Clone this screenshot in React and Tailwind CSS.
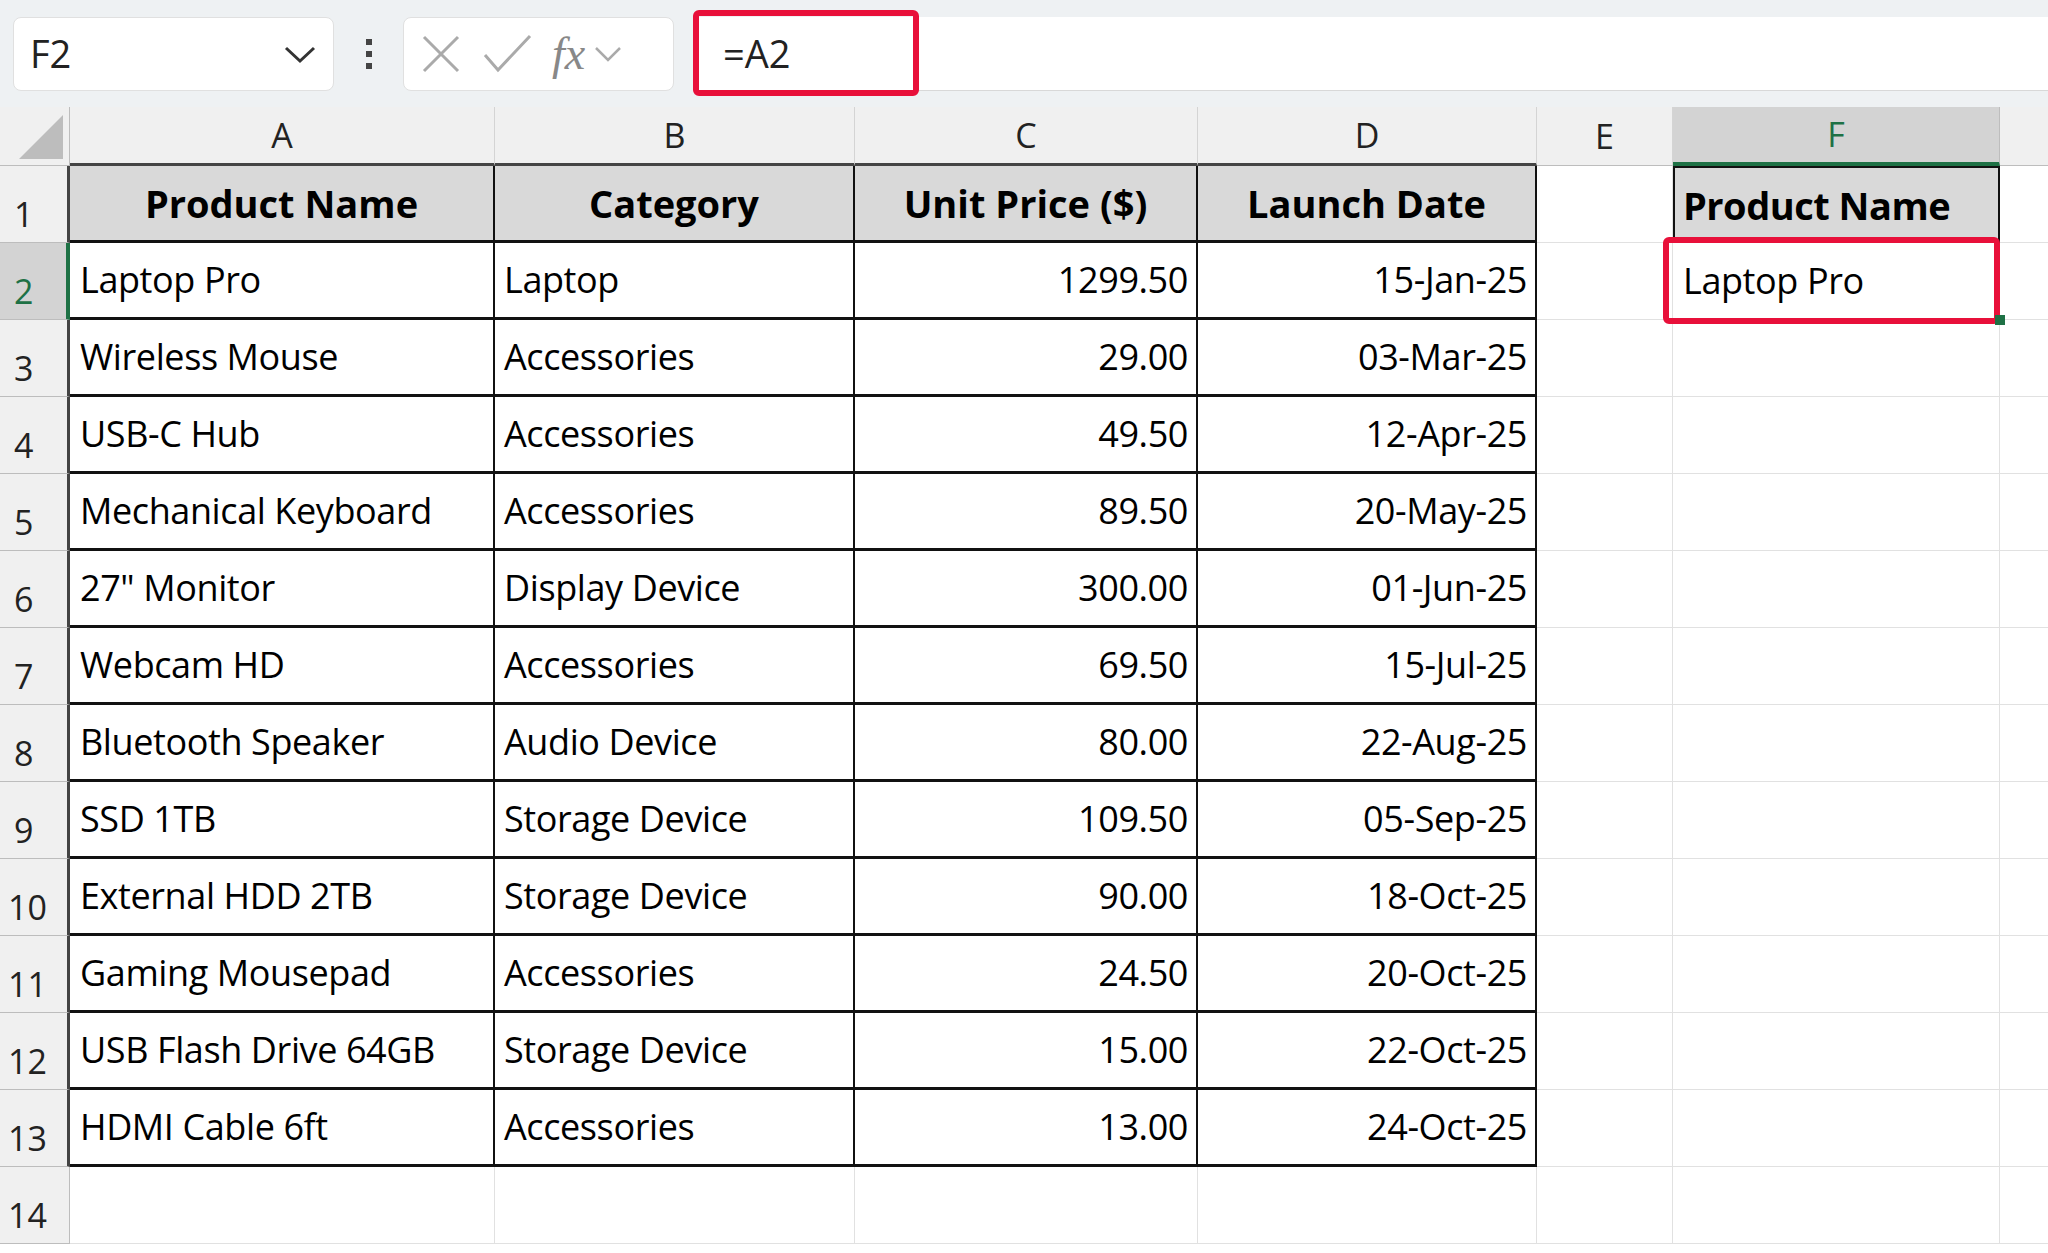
import React from "react";

const rows = [
  ["Laptop Pro", "Laptop", "1299.50", "15-Jan-25"],
  ["Wireless Mouse", "Accessories", "29.00", "03-Mar-25"],
  ["USB-C Hub", "Accessories", "49.50", "12-Apr-25"],
  ["Mechanical Keyboard", "Accessories", "89.50", "20-May-25"],
  ['27" Monitor', "Display Device", "300.00", "01-Jun-25"],
  ["Webcam HD", "Accessories", "69.50", "15-Jul-25"],
  ["Bluetooth Speaker", "Audio Device", "80.00", "22-Aug-25"],
  ["SSD 1TB", "Storage Device", "109.50", "05-Sep-25"],
  ["External HDD 2TB", "Storage Device", "90.00", "18-Oct-25"],
  ["Gaming Mousepad", "Accessories", "24.50", "20-Oct-25"],
  ["USB Flash Drive 64GB", "Storage Device", "15.00", "22-Oct-25"],
  ["HDMI Cable 6ft", "Accessories", "13.00", "24-Oct-25"],
];

const cols = "grid-cols-[70px_425px_360px_343px_339px_136px_327px_1fr]";

export default function App() {
  const font = { fontFamily: '"Open Sans", "Liberation Sans", sans-serif' };
  return (
    <div className="w-[2048px] h-[1253px] overflow-hidden bg-white text-black" style={font}>
      {/* toolbar */}
      <div className="h-[107px] bg-[#eef1f3] flex items-center pl-[13px] gap-0 relative">
        <div className="w-[321px] h-[74px] bg-white rounded-lg border border-[#e0e0e0] flex items-center justify-between px-4">
          <span className="text-[38px] text-[#222]">F2</span>
          <svg width="34" height="20" viewBox="0 0 34 20"><path d="M3 4 L17 17 L31 4" fill="none" stroke="#333" strokeWidth="3" /></svg>
        </div>
        <div className="w-[69px] flex flex-col items-center gap-[6px]">
          <div className="w-[6px] h-[6px] bg-[#444]" /><div className="w-[6px] h-[6px] bg-[#444]" /><div className="w-[6px] h-[6px] bg-[#444]" />
        </div>
        <div className="w-[271px] h-[74px] bg-white rounded-lg border border-[#e0e0e0] flex items-center gap-[20px] pl-4">
          <svg width="42" height="42" viewBox="0 0 42 42"><path d="M4 4 L38 38 M38 4 L4 38" stroke="#aaa" strokeWidth="3" /></svg>
          <svg width="50" height="42" viewBox="0 0 50 42"><path d="M3 22 L16 37 L48 3" fill="none" stroke="#aaa" strokeWidth="3" /></svg>
          <span className="text-[46px] italic text-[#888] leading-none" style={{ fontFamily: '"Liberation Serif", serif' }}>fx</span>
          <svg width="30" height="20" viewBox="0 0 30 20" className="-ml-3"><path d="M3 4 L15 16 L27 4" fill="none" stroke="#aaa" strokeWidth="2.5" /></svg>
        </div>
        <div className="ml-[19px] flex-1 h-[74px] bg-white border-b border-[#d8d8d8] flex items-center relative">
          <div className="absolute left-0 top-[-7px] w-[226px] h-[86px] border-[6px] border-[#e8103a] rounded-md" />
          <span className="text-[38px] text-[#222] pl-[30px]">=A2</span>
        </div>
      </div>
      {/* grid */}
      <div className={`grid ${cols} grid-rows-[59px_repeat(14,77px)]`}>
        {/* column headers */}
        <div className="bg-[#f0f0f0] border-r border-b border-[#bdbdbd] flex items-end justify-end p-[6px]">
          <svg width="44" height="44" viewBox="0 0 44 44"><polygon points="44,0 44,44 0,44" fill="#bdbdbd" /></svg>
        </div>
        {["A", "B", "C", "D", "E"].map((c, i) => (
          <div key={c} className={`bg-[#f0f0f0] border-r border-[#d4d4d4] flex items-center justify-center text-[34px] text-[#222] ${i < 4 ? "border-b-[3px] border-b-[#444]" : "border-b border-b-[#bdbdbd]"}`}>{c}</div>
        ))}
        <div className="bg-[#d3d3d3] border-r border-[#bdbdbd] border-b-[4px] border-b-[#1e7145] flex items-center justify-center text-[34px] text-[#1e7145]">F</div>
        <div className="bg-[#f0f0f0] border-b border-[#bdbdbd]" />

        {/* row 1 */}
        <div className="bg-[#f0f0f0] border-r-[3px] border-r-[#444] border-b border-[#bdbdbd] flex items-end pl-[14px] pb-[2px] text-[34px] text-[#222]">1</div>
        {["Product Name", "Category", "Unit Price ($)", "Launch Date"].map((h) => (
          <div key={h} className="bg-[#d9d9d9] border-r-[2px] border-b-[3px] border-[#111] flex items-center justify-center text-[38px] font-bold">{h}</div>
        ))}
        <div className="border-r border-b border-[#e1e1e1]" />
        <div className="bg-[#d9d9d9] border-x-[2px] border-t-[2px] border-[#111] flex items-center pl-[8px] text-[38px] font-bold whitespace-nowrap tracking-[-0.5px]">Product Name</div>
        <div className="border-b border-[#e1e1e1]" />

        {rows.map((r, i) => {
          const n = i + 2;
          return (
            <React.Fragment key={n}>
              <div className={`border-b border-[#bdbdbd] flex items-end pl-[8px] pb-[2px] text-[34px] ${n === 2 ? "bg-[#d3d3d3] text-[#1e7145] border-r-[4px] border-r-[#1e7145] pl-[14px]" : "bg-[#f0f0f0] text-[#222] border-r-[3px] border-r-[#444]"} ${n < 10 ? "pl-[14px]" : ""}`}>{n}</div>
              <div className="border-r-[2px] border-b-[3px] border-[#111] flex items-center pl-[10px] text-[36px] whitespace-nowrap overflow-hidden tracking-[-0.4px]">{r[0]}</div>
              <div className="border-r-[2px] border-b-[3px] border-[#111] flex items-center pl-[9px] text-[36px] whitespace-nowrap tracking-[-0.4px]">{r[1]}</div>
              <div className="border-r-[2px] border-b-[3px] border-[#111] flex items-center justify-end pr-[8px] text-[36px] tracking-[-0.4px]">{r[2]}</div>
              <div className="border-r-[2px] border-b-[3px] border-[#111] flex items-center justify-end pr-[8px] text-[36px] tracking-[-0.4px]">{r[3]}</div>
              <div className="border-r border-b border-[#e1e1e1]" />
              {n === 2 ? (
                <div className="relative border-r border-b border-[#e1e1e1] flex items-center pl-[10px] text-[36px] tracking-[-0.4px]">
                  Laptop Pro
                  <div className="absolute left-[-10px] top-[-6px] w-[337px] h-[87px] border-[6px] border-[#e8103a] rounded-md" />
                  <div className="absolute right-[-6px] bottom-[-6px] w-[10px] h-[10px] bg-[#1e7145]" />
                </div>
              ) : (
                <div className="border-r border-b border-[#e1e1e1]" />
              )}
              <div className="border-b border-[#e1e1e1]" />
            </React.Fragment>
          );
        })}
        {/* row 14 */}
        <div className="bg-[#f0f0f0] border-r border-b border-[#bdbdbd] flex items-end pl-[8px] pb-[2px] text-[34px] text-[#222]">14</div>
        {[0, 1, 2, 3, 4, 5].map((k) => (
          <div key={k} className="border-r border-b border-[#e1e1e1]" />
        ))}
        <div className="border-b border-[#e1e1e1]" />
      </div>
    </div>
  );
}
